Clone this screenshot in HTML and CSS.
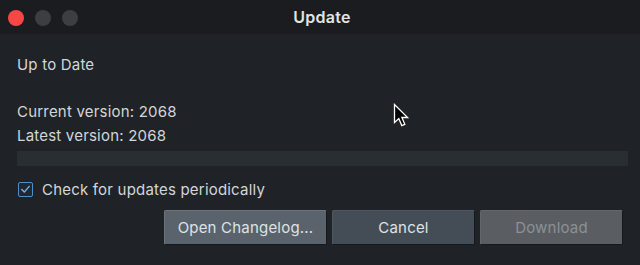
FILE: index.html
```html
<!DOCTYPE html>
<html>
<head>
<meta charset="utf-8">
<link rel="stylesheet" href="styles.css">
</head>
<body>
<div class="window">
  <div class="titlebar">
    <div class="lights">
      <span class="light red"></span>
      <span class="light gray"></span>
      <span class="light gray"></span>
    </div>
    <div class="title">Update</div>
  </div>
  <div class="content">
    <div class="line status">Up to Date</div>
    <div class="line current">Current version: 2068</div>
    <div class="line">Latest version: 2068</div>
    <div class="progress"></div>
    <label class="check-row">
      <span class="checkbox">
        <svg width="11" height="11" viewBox="0 0 11 11"><path d="M1.8 5.6 L4.3 8.1 L9.2 2.4" fill="none" stroke="#7fb2e0" stroke-width="1.4" stroke-linecap="round" stroke-linejoin="round"/></svg>
      </span>
      <span class="check-label">Check for updates periodically</span>
    </label>
    <div class="buttons">
      <button class="btn changelog">Open Changelog...</button>
      <button class="btn cancel">Cancel</button>
      <button class="btn download" disabled>Download</button>
    </div>
  </div>
  <svg class="cursor" width="18" height="26" viewBox="0 0 18 26">
    <path d="M1.5 1.5 L1.5 19.5 L5.8 15.6 L8.8 22.6 L11.8 21.3 L8.9 14.5 L14.6 14.5 Z" fill="#000" stroke="#fff" stroke-width="1.3" stroke-linejoin="miter"/>
  </svg>
</div>
</body>
</html>
```

FILE: styles.css
```css
* { box-sizing: border-box; }
html, body {
  margin: 0;
  padding: 0;
  background: #1f2327;
}
body {
  font-family: Inter, "Noto Sans", sans-serif;
  color: #d3d6d9;
  font-size: 15px;
  letter-spacing: 0.2px;
}
.window {
  position: relative;
  width: 640px;
  height: 265px;
  background: #1f2327;
  overflow: hidden;
}
.titlebar {
  position: relative;
  height: 34px;
  background: #1a1c1f;
  display: flex;
  align-items: center;
}
.lights {
  display: flex;
  gap: 11px;
  padding-left: 8px;
  padding-top: 1px;
}
.light {
  width: 16px;
  height: 16px;
  border-radius: 50%;
  display: block;
}
.light.red { background: #fb4646; }
.light.gray { background: #3c3e41; }
.title {
  position: absolute;
  left: 0;
  right: 0;
  top: 0;
  line-height: 34px;
  text-align: center;
  font-family: Inter, sans-serif;
  font-weight: 600;
  font-size: 16px;
  letter-spacing: 0.3px;
  color: #e2e4e6;
  padding-left: 4px;
}
.content {
  padding: 19px 12px 0 17px;
}
.line {
  line-height: 24px;
  height: 24px;
}
.status { line-height: 23px; height: 23px; }
.current { margin-top: 24px; }
.progress {
  margin-top: 3px;
  height: 15px;
  background: #292e33;
}
.check-row {
  margin-top: 11px;
  height: 24px;
  display: flex;
  align-items: center;
  gap: 9px;
}
.checkbox {
  width: 15px;
  height: 15px;
  border: 1.5px solid #4f8fc9;
  border-radius: 2px;
  background: #1e2933;
  display: flex;
  align-items: center;
  justify-content: center;
  margin-left: 1px;
}
.checkbox svg { display: block; }
.buttons {
  margin-top: 9px;
  margin-right: 5px;
  display: flex;
  justify-content: flex-end;
  gap: 5px;
}
.btn {
  height: 35px;
  font-family: Inter, "Noto Sans", sans-serif;
  font-size: 15px;
  letter-spacing: 0.2px;
  border: 1px solid #4a525a;
  border-radius: 2px;
  color: #dfe2e5;
  padding: 0;
}
.changelog {
  width: 163px;
  background: #5a636c;
  border-color: #6b747d #16191c #16191c #6b747d;
}
.cancel {
  width: 143px;
  background: #444d56;
  border-color: #4f5861 #16191c #16191c #4f5861;
}
.download {
  width: 143px;
  background: #5a5e62;
  color: #8d9094;
  border-color: #64686c #16191c #16191c #64686c;
}
.cursor {
  position: absolute;
  left: 393px;
  top: 103px;
}
```
